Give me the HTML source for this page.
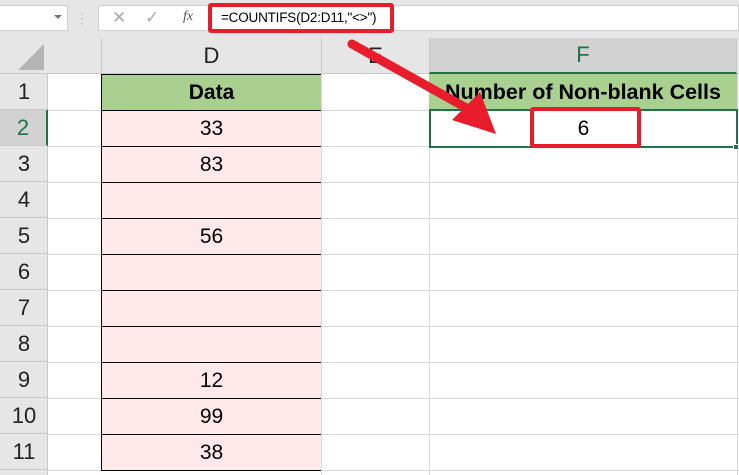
<!DOCTYPE html><html><head><style>
body{margin:0;width:739px;height:475px;overflow:hidden;background:#fff;font-family:"Liberation Sans",sans-serif;position:relative}
.a{position:absolute;box-sizing:border-box}
.t{display:flex;align-items:center;justify-content:center}
</style></head><body>
<div class="a" style="left:0;top:0;width:739px;height:38px;background:#e6e6e6"></div>
<div class="a" style="left:0;top:5px;width:68px;height:26px;background:#fff;border:1px solid #d0d0d0;border-left:none"></div>
<div class="a" style="left:54px;top:15px;width:0;height:0;border-left:4px solid transparent;border-right:4px solid transparent;border-top:4px solid #777"></div>
<div class="a" style="left:80px;top:11px;color:#aaa;font-size:12px;line-height:5px">·<br>·<br>·</div>
<div class="a" style="left:98px;top:5px;width:641px;height:26px;background:#fff;border:1px solid #d0d0d0"></div>
<div class="a" style="left:112px;top:8px;color:#aaa;font-size:17px">✕</div>
<div class="a" style="left:145px;top:8px;color:#aaa;font-size:17px">✓</div>
<div class="a" style="left:183px;top:9px;color:#555;font-size:14px;font-style:italic;font-family:'Liberation Serif',serif">fx</div>
<div class="a" style="left:221px;top:10px;font-size:13.5px;color:#000;letter-spacing:-0.2px">=COUNTIFS(D2:D11,"&lt;&gt;")</div>
<div class="a" style="left:208px;top:3px;width:186px;height:30px;border:4px solid #e81c2a;border-radius:3px"></div>
<div class="a" style="left:0;top:38px;width:739px;height:36px;background:#e6e6e6;border-bottom:1px solid #c8c8c8"></div>
<div class="a" style="left:18px;top:44px;width:0;height:0;border-left:26px solid transparent;border-bottom:26px solid #b4b4b4"></div>
<div class="a t" style="left:101px;top:38px;width:220px;height:36px;border-left:1px solid #c8c8c8;font-size:22px;color:#222">D</div>
<div class="a t" style="left:321px;top:38px;width:108px;height:36px;border-left:1px solid #c8c8c8;font-size:22px;color:#222">E</div>
<div class="a t" style="left:429px;top:38px;width:308px;height:36px;border-left:1px solid #c8c8c8;border-right:1px solid #c8c8c8;background:#d2d2d2;border-bottom:2px solid #217346;font-size:22px;color:#217346">F</div>
<div class="a" style="left:0;top:74px;width:48px;height:401px;background:#e6e6e6;border-right:1px solid #c8c8c8"></div>
<div id="rows"></div>
<script>
var h='';var d=['Data','33','83','','56','','','','12','99','38'];
for(var i=0;i<11;i++){var y=74+36*i;
h+='<div class="a t" style="left:0;top:'+y+'px;width:48px;height:36px;font-size:22px;color:#222;border-bottom:1px solid #c8c8c8;'+(i==1?'background:#d2d2d2;color:#217346;border-right:2px solid #217346;':'')+'">'+(i+1)+'</div>';
h+='<div class="a" style="left:48px;top:'+y+'px;width:691px;height:37px;border-bottom:1px solid #d8d8d8"></div>';
h+='<div class="a t" style="left:101px;top:'+y+'px;width:221px;height:37px;border:1px solid #000;background:'+(i==0?'#a9d08e;font-weight:bold':'#ffe9ea')+';font-size:21px">'+d[i]+'</div>';}
h+='<div class="a" style="left:321px;top:74px;width:1px;height:401px;background:#d8d8d8"></div><div class="a" style="left:429px;top:74px;width:1px;height:401px;background:#d8d8d8"></div><div class="a" style="left:737px;top:74px;width:1px;height:401px;background:#d8d8d8"></div>';
document.getElementById('rows').innerHTML=h;
</script>
<div class="a t" style="left:429px;top:74px;width:308px;height:37px;background:#a9d08e;font-weight:bold;font-size:21.5px;border-bottom:1px solid #000;white-space:nowrap">Number of Non-blank Cells</div>
<div class="a t" style="left:429px;top:109px;width:309px;height:39px;background:#fff;border:2px solid #217346;font-size:21px">6</div>
<div class="a" style="left:733px;top:144px;width:6px;height:6px;background:#217346;border:1px solid #fff"></div>
<div class="a" style="left:530px;top:107px;width:111px;height:41px;border:4px solid #e81c2a;border-radius:3px"></div>
<svg class="a" style="left:0;top:0" width="739" height="475"><line x1="352" y1="44" x2="470" y2="110" stroke="#e81c2a" stroke-width="9" stroke-linecap="round"/><polygon points="496,134 452,120 480,92" fill="#e81c2a"/></svg>
</body></html>
